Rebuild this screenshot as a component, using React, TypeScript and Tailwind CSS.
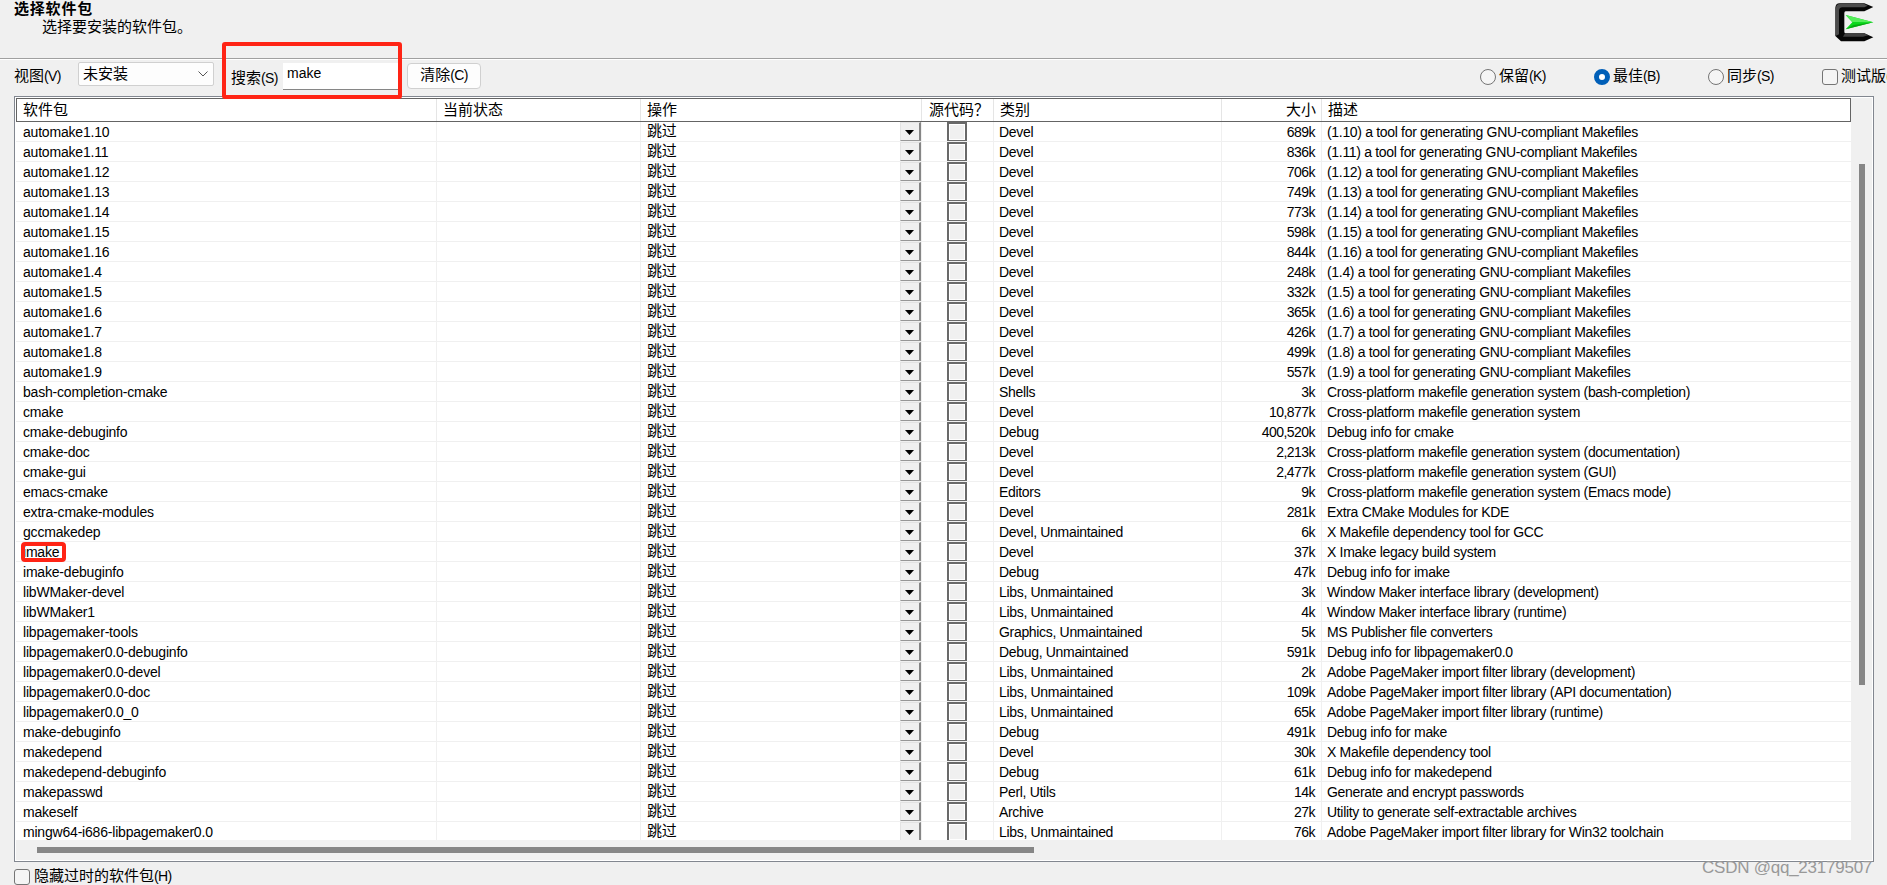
import React from 'react';

interface Package {
  name: string;
  category: string;
  size: string;
  description: string;
}

const automake = (version: string, size: string): Package => ({
  name: `automake${version}`,
  category: 'Devel',
  size,
  description: `(${version}) a tool for generating GNU-compliant Makefiles`,
});

const pkg = (name: string, category: string, size: string, description: string): Package => ({
  name,
  category,
  size,
  description,
});

const packages: Package[] = [
  automake('1.10', '689k'),
  automake('1.11', '836k'),
  automake('1.12', '706k'),
  automake('1.13', '749k'),
  automake('1.14', '773k'),
  automake('1.15', '598k'),
  automake('1.16', '844k'),
  automake('1.4', '248k'),
  automake('1.5', '332k'),
  automake('1.6', '365k'),
  automake('1.7', '426k'),
  automake('1.8', '499k'),
  automake('1.9', '557k'),
  pkg('bash-completion-cmake', 'Shells', '3k', 'Cross-platform makefile generation system (bash-completion)'),
  pkg('cmake', 'Devel', '10,877k', 'Cross-platform makefile generation system'),
  pkg('cmake-debuginfo', 'Debug', '400,520k', 'Debug info for cmake'),
  pkg('cmake-doc', 'Devel', '2,213k', 'Cross-platform makefile generation system (documentation)'),
  pkg('cmake-gui', 'Devel', '2,477k', 'Cross-platform makefile generation system (GUI)'),
  pkg('emacs-cmake', 'Editors', '9k', 'Cross-platform makefile generation system (Emacs mode)'),
  pkg('extra-cmake-modules', 'Devel', '281k', 'Extra CMake Modules for KDE'),
  pkg('gccmakedep', 'Devel, Unmaintained', '6k', 'X Makefile dependency tool for GCC'),
  pkg('imake', 'Devel', '37k', 'X Imake legacy build system'),
  pkg('imake-debuginfo', 'Debug', '47k', 'Debug info for imake'),
  pkg('libWMaker-devel', 'Libs, Unmaintained', '3k', 'Window Maker interface library (development)'),
  pkg('libWMaker1', 'Libs, Unmaintained', '4k', 'Window Maker interface library (runtime)'),
  pkg('libpagemaker-tools', 'Graphics, Unmaintained', '5k', 'MS Publisher file converters'),
  pkg('libpagemaker0.0-debuginfo', 'Debug, Unmaintained', '591k', 'Debug info for libpagemaker0.0'),
  pkg('libpagemaker0.0-devel', 'Libs, Unmaintained', '2k', 'Adobe PageMaker import filter library (development)'),
  pkg('libpagemaker0.0-doc', 'Libs, Unmaintained', '109k', 'Adobe PageMaker import filter library (API documentation)'),
  pkg('libpagemaker0.0_0', 'Libs, Unmaintained', '65k', 'Adobe PageMaker import filter library (runtime)'),
  pkg('make-debuginfo', 'Debug', '491k', 'Debug info for make'),
  pkg('makedepend', 'Devel', '30k', 'X Makefile dependency tool'),
  pkg('makedepend-debuginfo', 'Debug', '61k', 'Debug info for makedepend'),
  pkg('makepasswd', 'Perl, Utils', '14k', 'Generate and encrypt passwords'),
  pkg('makeself', 'Archive', '27k', 'Utility to generate self-extractable archives'),
  pkg('mingw64-i686-libpagemaker0.0', 'Libs, Unmaintained', '76k', 'Adobe PageMaker import filter library for Win32 toolchain'),
];

const Label: React.FC<{ text: string; accel: string }> = ({ text, accel }) => (
  <span className="whitespace-nowrap text-[15px] leading-5">
    {text}
    <span className="text-[14px] tracking-[-0.6px]">({accel})</span>
  </span>
);

const Radio: React.FC<{ text: string; accel: string; checked?: boolean }> = ({ text, accel, checked }) => (
  <label className="flex w-[114px] shrink-0 items-center gap-[3px]">
    <span
      className={
        checked
          ? 'h-4 w-4 rounded-full border-[5px] border-[#005fb8] bg-white'
          : 'h-4 w-4 rounded-full border border-[#757575] bg-[#f5f5f5]'
      }
    />
    <span className="flex pb-[2px]">
      <Label text={text} accel={accel} />
    </span>
  </label>
);

const CygwinLogo: React.FC = () => (
  <svg className="h-[39px] w-[39px]" viewBox="0 0 117 117">
    <path d="M14 1H88L115 12L88 25H32Q28 25 28 30V86Q28 91 32 91H88L115 103L88 115H18L1 99V14Q2 1 14 1Z" fill="#060606" />
    <path d="M14 3H88L98 8L88 13H22Q12 13 12 24V94L3 98V14Q4 3 14 3Z" fill="#4c4c4c" />
    <path d="M30 91H88L100 97L84 101H24Z" fill="#404040" />
    <path d="M32 36L115 58L32 79L52 58Z" fill="#0ad81c" />
    <path d="M32 36L115 58L52 57Z" fill="#55ee5a" />
    <path d="M32 79L56 66L115 58Z" fill="#07a812" />
  </svg>
);

const Row: React.FC<{ item: Package }> = ({ item }) => (
  <div className="grid h-5 shrink-0 grid-cols-[421px_204px_281px_72px_228px_100px_1fr] grid-rows-[20px] text-[14px] leading-[21px] tracking-[-0.32px]">
    <div className="border-r border-b border-[#f0f0f0] pl-[7px] tracking-[-0.2px]">{item.name}</div>
    <div className="border-r border-b border-[#f0f0f0]" />
    <div className="flex justify-between border-r border-b border-[#f0f0f0] pl-[6px]">
      <span className="text-[15px] leading-[18px] tracking-[-0.3px]">跳过</span>
      <span className="flex h-[19px] w-[21px] items-center justify-center border-t border-r-2 border-b border-l border-t-[#e3e3e3] border-r-[#858585] border-b-[#969696] border-l-[#e3e3e3] bg-[#f0f0f0] pt-px pr-px">
        <svg className="h-[5px] w-[9px]" viewBox="0 0 9 5">
          <path d="M0 0H9L4.500 5Z" fill="#000" />
        </svg>
      </span>
    </div>
    <div className="border-r border-b border-[#f0f0f0] pl-[25px]">
      <span className="block h-[19px] w-5 border-t-2 border-r-2 border-b border-l-2 border-[#696969] bg-white pt-px pl-px">
        <span className="block h-[14px] w-[14px] bg-[#f0f0f0]" />
      </span>
    </div>
    <div className="border-r border-b border-[#f0f0f0] pl-[5px]">{item.category}</div>
    <div className="border-r border-b border-[#f0f0f0] pr-[6px] text-right tracking-[-0.55px]">{item.size}</div>
    <div className="border-b border-[#f0f0f0] pl-[5px] whitespace-nowrap">{item.description}</div>
  </div>
);

export default function App() {
  return (
    <div className="relative flex h-[885px] w-[1887px] flex-col overflow-hidden bg-[#f0f0f0] font-['Liberation_Sans','Noto_Sans_CJK_SC',sans-serif] text-black">
      {/* Page title */}
      <header className="flex h-[59px] shrink-0 justify-between border-b border-[#a0a0a0] pr-[13px] pl-[14px]">
        <div className="text-[15px] leading-[18px]">
          <h1 className="font-bold tracking-[0.8px]">选择软件包</h1>
          <p className="pl-7">选择要安装的软件包。</p>
        </div>
        <div className="pt-[3px]">
          <CygwinLogo />
        </div>
      </header>

      {/* Toolbar */}
      <div className="flex h-[37px] shrink-0 border-t border-white pl-[14px]">
        <div className="w-16 pt-1">
          <Label text="视图" accel="V" />
        </div>
        <div className="mt-[2px] flex h-6 w-[136px] items-center justify-between rounded-[2px] border border-[#d0d0d0] bg-[#fdfdfd] pr-[5px] pl-1 text-[15px]">
          <span className="pb-px leading-5">未安装</span>
          <svg className="h-[6px] w-[10px]" viewBox="0 0 10 6">
            <path d="M0.500 0.500L5 5L9.500 0.500" fill="none" stroke="#555" />
          </svg>
        </div>
        <div className="w-[69px] pt-[6px] pl-[17px]">
          <Label text="搜索" accel="S" />
        </div>
        <div className="mt-[3px] h-[27px] w-[116px] border-b border-[#868686] bg-white pl-1 text-[14px] leading-[21px]">make</div>
        <button className="mt-[3px] ml-[8px] flex h-[26px] w-[74px] justify-center rounded border border-[#d0d0d0] bg-[#fdfdfd] pt-px">
          <Label text="清除" accel="C" />
        </button>
        <div className="ml-auto flex h-[34px] w-[407px] items-center">
          <Radio text="保留" accel="K" />
          <Radio text="最佳" accel="B" checked />
          <Radio text="同步" accel="S" />
          <label className="flex shrink-0 items-center gap-[3px]">
            <span className="h-4 w-4 rounded-[3px] border border-[#757575] bg-[#f5f5f5]" />
            <span className="flex pb-[2px]">
              <Label text="测试版" accel="T" />
            </span>
          </label>
        </div>
      </div>

      {/* Package list */}
      <div className="ml-[14px] h-[766px] w-[1860px] shrink-0 border border-[#828790] bg-[#f0f0f0]">
        <div className="flex h-[764px] flex-col border border-white">
          <div className="flex h-[742px] shrink-0">
            <div className="flex w-[1835px] flex-col overflow-hidden bg-white">
              <div className="grid h-6 shrink-0 grid-cols-[420px_204px_281px_72px_228px_100px_1fr] grid-rows-[22px] border border-[#646464] text-[15px] leading-[21px]">
                <div className="border-r border-[#e5e5e5] pl-[6px]">软件包</div>
                <div className="border-r border-[#e5e5e5] pl-[6px]">当前状态</div>
                <div className="border-r border-[#e5e5e5] pl-[6px]">操作</div>
                <div className="border-r border-[#e5e5e5] pl-[7px] whitespace-nowrap">源代码？</div>
                <div className="border-r border-[#e5e5e5] pl-[6px]">类别</div>
                <div className="border-r border-[#e5e5e5] pr-[5px] text-right">大小</div>
                <div className="pl-[6px]">描述</div>
              </div>
              {packages.map((item) => (
                <Row key={item.name} item={item} />
              ))}
            </div>
            <div className="pt-[66px] pl-[8px]">
              <div className="h-[521px] w-[6px] bg-[#868686]" />
            </div>
          </div>
          <div className="pt-[7px] pl-[21px]">
            <div className="h-[6px] w-[997px] bg-[#868686]" />
          </div>
        </div>
      </div>

      {/* Footer */}
      <label className="flex shrink-0 items-center gap-1 pt-1 pl-[14px]">
        <span className="h-4 w-4 rounded-[3px] border border-[#757575] bg-[#f5f5f5]" />
        <span className="flex pb-[2px]">
          <Label text="隐藏过时的软件包" accel="H" />
        </span>
      </label>

      {/* Highlights and watermark */}
      <div className="absolute top-[42px] left-[222px] h-[57px] w-[180px] rounded-[3px] border-4 border-[#ff2415]" />
      <div className="absolute top-[542px] left-[21px] h-5 w-[45px] rounded-[4px] border-4 border-[#ff2415]" />
      <div className="absolute top-[858px] left-[1702px] text-[17px] leading-5 tracking-[-0.24px] whitespace-nowrap text-[#999]">CSDN @qq_23179507</div>
    </div>
  );
}
